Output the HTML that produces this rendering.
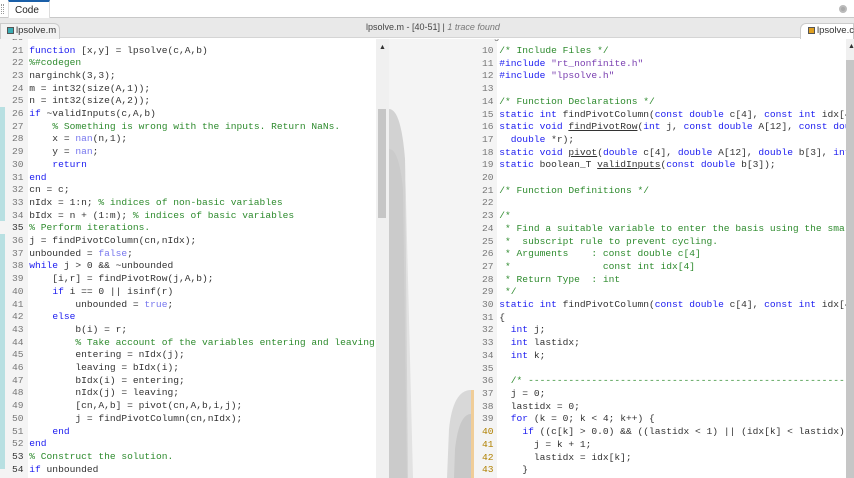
<!DOCTYPE html>
<html><head><meta charset="utf-8"><style>
*{margin:0;padding:0;box-sizing:border-box}
body{width:854px;height:478px;overflow:hidden;background:#fff;position:relative;font-family:"Liberation Sans",sans-serif}
.a{position:absolute}
.ln{position:absolute;font-family:"Liberation Mono",monospace;font-size:9.6px;line-height:12.7px;white-space:pre;color:#333}
.n{color:#777}
.k{color:#1c1cf0}
.c{color:#2e8b2e}
.s{color:#7a3fb0}
.p{color:#7777ee}
.o{color:#b08000}
</style></head><body>
<!-- top bar -->
<div class="a" style="left:0;top:0;width:854px;height:18px;background:#fff;border-bottom:1px solid #c8c8c8"></div>
<div class="a" style="left:1px;top:4px;width:3px;height:10px;border-left:1px dotted #999;border-right:1px dotted #999"></div>
<div class="a" style="left:8px;top:0;width:42px;height:18px;background:#fff;border-top:2px solid #1a5fa8;border-left:1px solid #ddd;border-right:1px solid #ddd;font-size:10px;color:#222;padding:3px 0 0 6px">Code</div>
<div class="a" style="left:839px;top:5px;width:8px;height:8px;border-radius:50%;background:#aaa;border:2px solid #bbb"></div>
<!-- header strip -->
<div class="a" style="left:0;top:18px;width:854px;height:20px;background:#e9e9e9;border-bottom:1px solid #d5d5d5"></div>
<div class="a" style="left:0;top:23px;width:60px;height:16px;background:#f2f2f2;border:1px solid #ccc;border-bottom:none;border-radius:0 6px 0 0"></div>
<div class="a" style="left:7px;top:27px;width:7px;height:7px;background:#3aacb4;border:1px solid #555"></div>
<div class="a" style="left:16px;top:25px;font-size:9.5px;color:#333">lpsolve.m</div>
<div class="a" style="left:366px;top:22px;font-size:9px;color:#444">lpsolve.m - [40-51] | <i style="color:#777">1 trace found</i></div>
<div class="a" style="left:800px;top:23px;width:54px;height:16px;background:#fff;border:1px solid #ccc;border-bottom:none;border-radius:6px 0 0 0"></div>
<div class="a" style="left:808px;top:27px;width:7px;height:7px;background:#e0a020;border:1px solid #555"></div>
<div class="a" style="left:817px;top:25px;font-size:9.5px;color:#333">lpsolve.c</div>
<!-- left pane -->
<div class="a" style="left:0;top:39px;width:28px;height:439px;background:#f4f4f4"></div>
<div class="a" style="left:0;top:107px;width:5px;height:362px;background:#b8e0e2"></div>
<div class="a" style="left:0;top:221px;width:5px;height:13px;background:#f4f4f4"></div>
<div class="a" style="left:376px;top:39px;width:13px;height:439px;background:#f0f0f0"></div>
<div class="a" style="left:378px;top:109px;width:8px;height:109px;background:#c6c6c6"></div>
<div class="a" style="left:379px;top:44px;font-size:7px;color:#333">▲</div>
<!-- middle gutter -->
<div class="a" style="left:389px;top:39px;width:82px;height:439px;background:#f4f4f4"></div>
<svg class="a" style="left:389px;top:39px" width="82" height="439">
<path d="M0 70 Q12 70 16 120 L22 439 L0 439Z" fill="#d2d2d2"/>
<path d="M0 110 Q10 110 14 150 L18 439 L0 439Z" fill="#cbcbcb"/>
<path d="M16 120 L24 439 L19 439Z" fill="#e2e2e2"/>
<path d="M82 351 Q64 351 60 390 L58 439 L82 439Z" fill="#d8d8d8"/>
<path d="M82 375 Q70 375 66 410 L65 439 L82 439Z" fill="#c8c8c8"/>
</svg>
<!-- right pane -->
<div class="a" style="left:471px;top:39px;width:26px;height:439px;background:#f4f4f4"></div>
<div class="a" style="left:471px;top:390px;width:3px;height:88px;background:#f0cd98"></div>
<div class="a" style="left:846px;top:39px;width:8px;height:439px;background:#f0f0f0"></div>
<div class="a" style="left:846px;top:60px;width:8px;height:418px;background:#c6c6c6"></div>
<div class="a" style="left:848px;top:43px;font-size:7px;color:#333">▲</div>

<div class="a" style="left:0;top:39px;width:376px;height:439px;overflow:hidden">
<div class="ln" style="left:12px;top:-7px"><span class="n">20</span></div>
<div class="ln" style="left:12px;top:5.5px"><span class="n">21</span> <span class="k">function</span> [x,y] = lpsolve(c,A,b)
<span class="n">22</span> <span class="c">%#codegen</span>
<span class="n">23</span> narginchk(3,3);
<span class="n">24</span> m = int32(size(A,1));
<span class="n">25</span> n = int32(size(A,2));
<span class="n">26</span> <span class="k">if</span> ~validInputs(c,A,b)
<span class="n">27</span>     <span class="c">% Something is wrong with the inputs. Return NaNs.</span>
<span class="n">28</span>     x = <span class="p">nan</span>(n,1);
<span class="n">29</span>     y = <span class="p">nan</span>;
<span class="n">30</span>     <span class="k">return</span>
<span class="n">31</span> <span class="k">end</span>
<span class="n">32</span> cn = c;
<span class="n">33</span> nIdx = 1:n; <span class="c">% indices of non-basic variables</span>
<span class="n">34</span> bIdx = n + (1:m); <span class="c">% indices of basic variables</span>
<span style="color:#333">35</span> <span class="c">% Perform iterations.</span>
<span class="n">36</span> j = findPivotColumn(cn,nIdx);
<span class="n">37</span> unbounded = <span class="p">false</span>;
<span class="n">38</span> <span class="k">while</span> j > 0 && ~unbounded
<span class="n">39</span>     [i,r] = findPivotRow(j,A,b);
<span class="n">40</span>     <span class="k">if</span> i == 0 || isinf(r)
<span class="n">41</span>         unbounded = <span class="p">true</span>;
<span class="n">42</span>     <span class="k">else</span>
<span class="n">43</span>         b(i) = r;
<span class="n">44</span>         <span class="c">% Take account of the variables entering and leaving</span>
<span class="n">45</span>         entering = nIdx(j);
<span class="n">46</span>         leaving = bIdx(i);
<span class="n">47</span>         bIdx(i) = entering;
<span class="n">48</span>         nIdx(j) = leaving;
<span class="n">49</span>         [cn,A,b] = pivot(cn,A,b,i,j);
<span class="n">50</span>         j = findPivotColumn(cn,nIdx);
<span class="n">51</span>     <span class="k">end</span>
<span class="n">52</span> <span class="k">end</span>
<span style="color:#333">53</span> <span class="c">% Construct the solution.</span>
<span style="color:#333">54</span> <span class="k">if</span> unbounded</div>
</div>

<div class="a" style="left:471px;top:39px;width:375px;height:439px;overflow:hidden">
<div class="ln" style="left:17px;top:-6px"><span class="n"> 9</span></div>
<div class="ln" style="left:11px;top:6px"><span class="n">10</span> <span class="c">/* Include Files */</span>
<span class="n">11</span> <span class="k">#include</span> <span class="s">"rt_nonfinite.h"</span>
<span class="n">12</span> <span class="k">#include</span> <span class="s">"lpsolve.h"</span>
<span class="n">13</span>
<span class="n">14</span> <span class="c">/* Function Declarations */</span>
<span class="n">15</span> <span class="k">static int</span> findPivotColumn(<span class="k">const double</span> c[4], <span class="k">const int</span> idx[4]);
<span class="n">16</span> <span class="k">static void</span> <u>findPivotRow</u>(<span class="k">int</span> j, <span class="k">const double</span> A[12], <span class="k">const double</span>
<span class="n">17</span>   <span class="k">double</span> *r);
<span class="n">18</span> <span class="k">static void</span> <u>pivot</u>(<span class="k">double</span> c[4], <span class="k">double</span> A[12], <span class="k">double</span> b[3], <span class="k">int</span>
<span class="n">19</span> <span class="k">static</span> boolean_T <u>validInputs</u>(<span class="k">const double</span> b[3]);
<span class="n">20</span>
<span class="n">21</span> <span class="c">/* Function Definitions */</span>
<span class="n">22</span>
<span class="n">23</span> <span class="c">/*</span>
<span class="n">24</span> <span class="c"> * Find a suitable variable to enter the basis using the smallest</span>
<span class="n">25</span> <span class="c"> *  subscript rule to prevent cycling.</span>
<span class="n">26</span> <span class="c"> * Arguments    : const double c[4]</span>
<span class="n">27</span> <span class="c"> *                const int idx[4]</span>
<span class="n">28</span> <span class="c"> * Return Type  : int</span>
<span class="n">29</span> <span class="c"> */</span>
<span class="n">30</span> <span class="k">static int</span> findPivotColumn(<span class="k">const double</span> c[4], <span class="k">const int</span> idx[4])
<span class="n">31</span> {
<span class="n">32</span>   <span class="k">int</span> j;
<span class="n">33</span>   <span class="k">int</span> lastidx;
<span class="n">34</span>   <span class="k">int</span> k;
<span class="n">35</span>
<span class="n">36</span>   <span class="c">/* ----------------------------------------------------------------</span>
<span class="n">37</span>   j = 0;
<span class="n">38</span>   lastidx = 0;
<span class="n">39</span>   <span class="k">for</span> (k = 0; k < 4; k++) {
<span class="o">40</span>     <span class="k">if</span> ((c[k] > 0.0) && ((lastidx < 1) || (idx[k] < lastidx)))
<span class="o">41</span>       j = k + 1;
<span class="o">42</span>       lastidx = idx[k];
<span class="o">43</span>     }</div>
</div>
</body></html>
